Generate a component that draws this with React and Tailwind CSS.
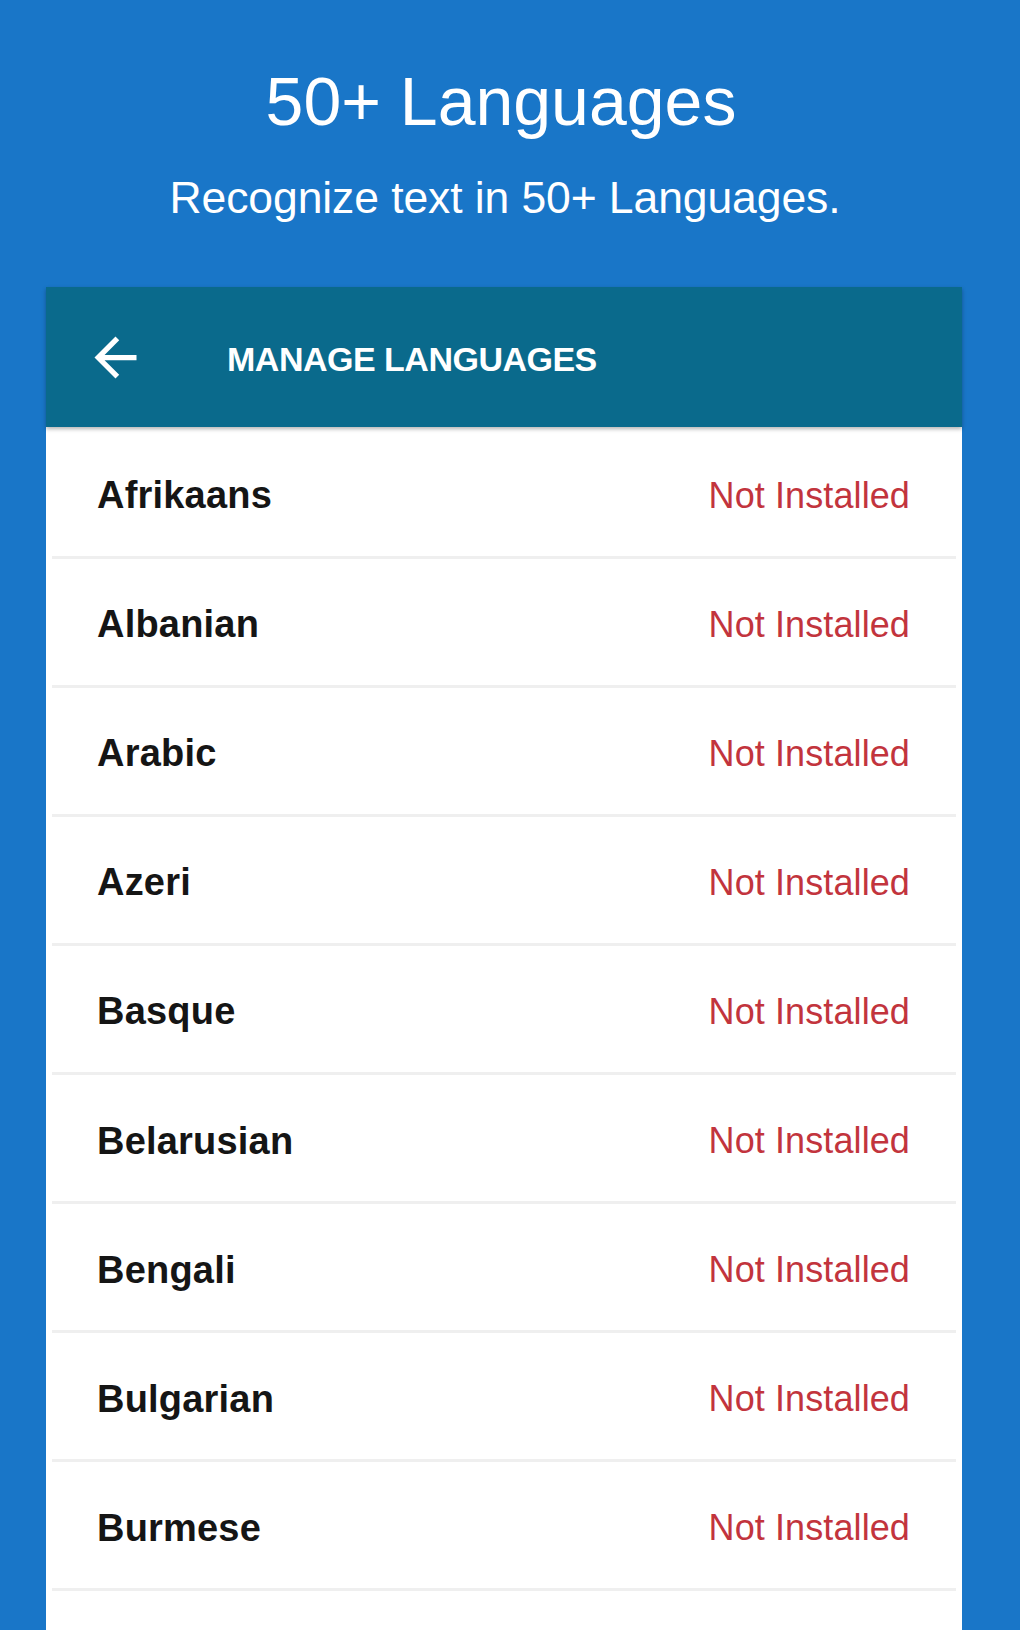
const languages = [
  "Afrikaans",
  "Albanian",
  "Arabic",
  "Azeri",
  "Basque",
  "Belarusian",
  "Bengali",
  "Bulgarian",
  "Burmese",
];

function BackArrow() {
  return (
    <svg viewBox="0 0 24 24" className="w-[63px] h-[63px] fill-white">
      <path d="M20 11H7.83l5.59-5.59L12 4l-8 8 8 8 1.41-1.41L7.83 13H20v-2z" />
    </svg>
  );
}

export default function App() {
  return (
    <div className="w-[1020px] h-[1630px] overflow-hidden bg-[#1976c8] font-['Liberation_Sans',Arial,sans-serif]">
      {/* Promo heading */}
      <div className="pt-[67px] pr-[18px] flex flex-col items-center text-white">
        <h1 className="text-[68px] leading-none">50+ Languages</h1>
        <p className="mt-[41px] ml-[8px] text-[44.5px] leading-none tracking-[-0.1px]">
          Recognize text in 50+ Languages.
        </p>
      </div>

      {/* Phone screen card */}
      <div className="ml-[46px] mt-[66px] w-[916px] bg-white">
        <div className="relative z-10 h-[140px] bg-[#0a6a8c] flex items-center shadow-[0_2px_4px_rgba(0,0,0,0.3)]">
          <div className="ml-[38px] mt-[2px]">
            <BackArrow />
          </div>
          <span className="ml-[80px] mt-[6px] text-white font-bold text-[34px] tracking-[-0.5px]">
            MANAGE LANGUAGES
          </span>
        </div>

        <ul className="pt-[3px]">
          {languages.map((name) => (
            <li key={name} className="h-[129.1px] flex flex-col">
              <div className="flex-1 flex items-center justify-between pt-[6px] pl-[51px] pr-[52px]">
                <span className="text-[38px] font-bold text-[#151515] tracking-[0.2px]">
                  {name}
                </span>
                <span className="text-[36px] text-[#c2343d] tracking-[0.1px]">
                  Not Installed
                </span>
              </div>
              <div className="mx-[6px] h-[3px] bg-[#efefef]" />
            </li>
          ))}
          <li className="h-[129px]" />
        </ul>
      </div>
    </div>
  );
}
